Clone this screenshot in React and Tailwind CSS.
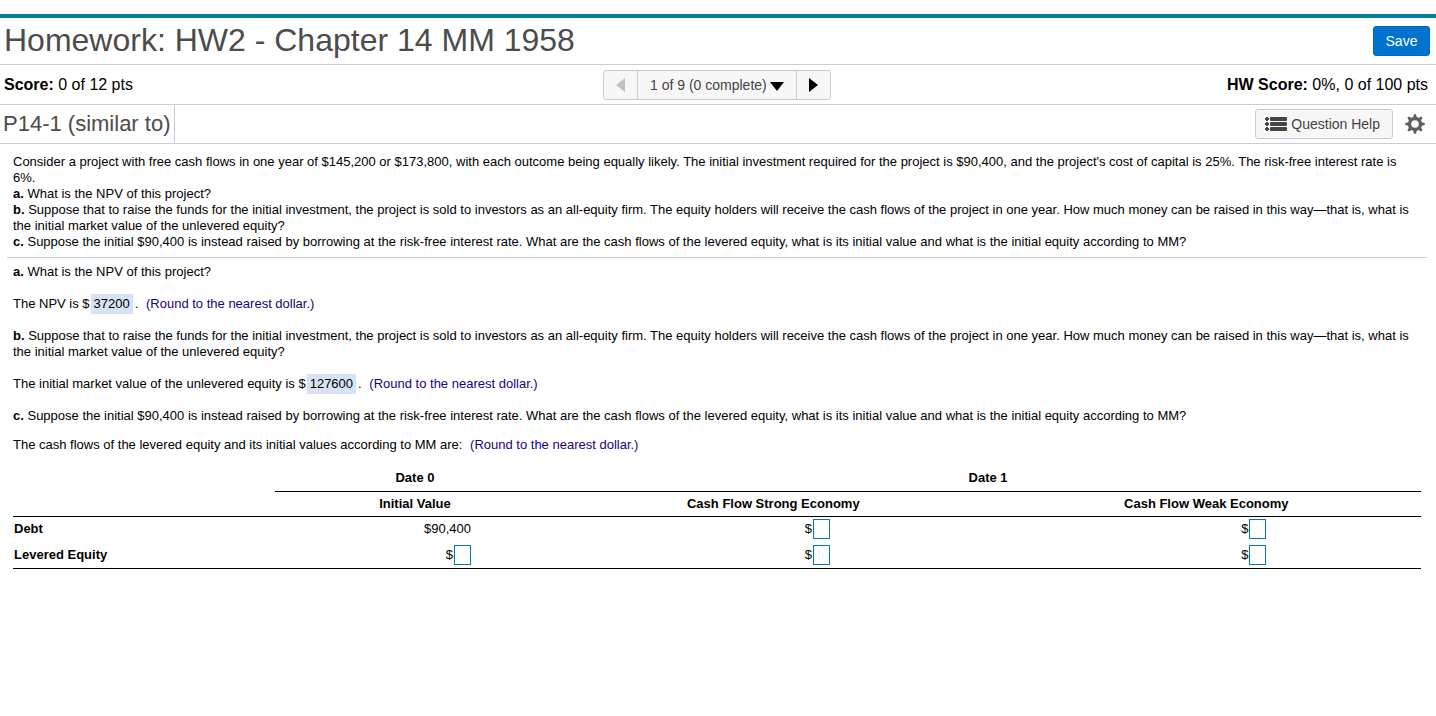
import React, { useState } from 'react';

const QUESTION_COUNT = 9;

const ListIcon = () => (
  <svg width="22" height="14" viewBox="0 0 22 14" fill="#444" aria-hidden="true">
    {[0, 5, 10].map((y) => (
      <g key={y}>
        <path d={`M1 ${y}h2v1h1v2h-1v1h-2v-1h-1v-2h1z`} />
        <rect x="5" y={y} width="17" height="4" rx="1" />
      </g>
    ))}
  </svg>
);

const GearIcon = () => (
  <svg width="20" height="20" viewBox="0 0 20 20" aria-hidden="true">
    <g fill="#5f5f5f">
      {[0, 45, 90, 135, 180, 225, 270, 315].map((deg) => (
        <path key={deg} d="M9 0.3h2l1 4h-4z" transform={`rotate(${deg} 10 10)`} />
      ))}
    </g>
    <circle cx="10" cy="10" r="5.5" fill="none" stroke="#5f5f5f" strokeWidth="3.4" />
  </svg>
);

const Hint = () => <span className="ml-1 text-[#1b0080]">(Round to the nearest dollar.)</span>;

const Answer = ({ children }) => (
  <>
    <span className="mx-px inline-block bg-[#d9e2f3] px-[3px] h-5 leading-5 -my-0.5">{children}</span>
    <span className="ml-px">.</span>
  </>
);

const MoneyInput = ({ label }) => (
  <label className="flex items-center gap-px">
    $
    <input type="text" aria-label={label} className="w-[17px] h-5 border border-[#007fa3] bg-white px-0.5 outline-none" />
  </label>
);

const PartB = () => (
  <p>
    <b>b.</b> Suppose that to raise the funds for the initial investment, the project is sold to investors as an
    all-equity firm. The equity holders will receive the cash flows of the project in one year. How much money can be
    raised in this way—that is, what is the initial market value of the unlevered equity?
  </p>
);

const PartC = () => (
  <p>
    <b>c.</b> Suppose the initial $90,400 is instead raised by borrowing at the risk-free interest rate. What are the
    cash flows of the levered equity, what is its initial value and what is the initial equity according to MM?
  </p>
);

const PartA = () => (
  <p>
    <b>a.</b> What is the NPV of this project?
  </p>
);

const Pager = () => {
  const [current, setCurrent] = useState(1);

  return (
    <div className="flex h-[30px] rounded-[3px] border border-[#ccc] bg-[#f7f7f7]">
      <button
        type="button"
        aria-label="Previous question"
        disabled={current === 1}
        onClick={() => setCurrent(current - 1)}
        className="flex w-[34px] items-center justify-center border-r border-[#ccc] text-black disabled:text-[#bfc1c4]"
      >
        <svg width="9" height="14" viewBox="0 0 9 14" fill="currentColor">
          <path d="M9 0v14L0 7z" />
        </svg>
      </button>
      <div className="relative">
        <select
          aria-label="Question"
          value={current}
          onChange={(e) => setCurrent(Number(e.target.value))}
          className="h-full w-[158px] appearance-none bg-transparent pl-3 pr-6 text-sm text-[#444] outline-none"
        >
          {Array.from({ length: QUESTION_COUNT }, (_, i) => (
            <option key={i} value={i + 1}>
              {i + 1} of {QUESTION_COUNT} (0 complete)
            </option>
          ))}
        </select>
        <svg className="pointer-events-none absolute right-3 top-[11px]" width="14" height="9" viewBox="0 0 14 9">
          <path d="M0 0h14L7 9z" />
        </svg>
      </div>
      <button
        type="button"
        aria-label="Next question"
        disabled={current === QUESTION_COUNT}
        onClick={() => setCurrent(current + 1)}
        className="flex w-[34px] items-center justify-center border-l border-[#ccc] text-black disabled:text-[#bfc1c4]"
      >
        <svg width="9" height="14" viewBox="0 0 9 14" fill="currentColor">
          <path d="M0 0v14l9-7z" />
        </svg>
      </button>
    </div>
  );
};

const CashFlowTable = () => (
  <table className="mt-[13px] w-full table-fixed border-collapse">
    <colgroup>
      <col className="w-[18.6%]" />
      <col className="w-[19.9%]" />
      <col className="w-[31%]" />
      <col />
    </colgroup>
    <thead>
      <tr className="h-[25px]">
        <td />
        <th scope="col" className="border-b border-black">Date 0</th>
        <th scope="colgroup" colSpan={2} className="border-b border-black">Date 1</th>
      </tr>
      <tr className="h-[25px] border-b border-black">
        <td />
        <th scope="col">Initial Value</th>
        <th scope="col">Cash Flow Strong Economy</th>
        <th scope="col">Cash Flow Weak Economy</th>
      </tr>
    </thead>
    <tbody className="border-b border-black">
      {['Debt', 'Levered Equity'].map((name) => (
        <tr key={name} className="h-[26px]">
          <th scope="row" className="pl-px text-left">{name}</th>
          <td>
            <div className="flex w-[70%] justify-end">
              {name === 'Debt' ? '$90,400' : <MoneyInput label={`${name} initial value`} />}
            </div>
          </td>
          <td>
            <div className="flex w-[63%] justify-end">
              <MoneyInput label={`${name} cash flow strong economy`} />
            </div>
          </td>
          <td>
            <div className="flex w-[64%] justify-end">
              <MoneyInput label={`${name} cash flow weak economy`} />
            </div>
          </td>
        </tr>
      ))}
    </tbody>
  </table>
);

const App = () => {
  return (
    <div className="bg-white pt-[14px] font-['Liberation_Sans',Arial,sans-serif] text-[13px] leading-4 text-black">
      <header className="flex h-[51px] items-center justify-between border-t-4 border-b border-t-[#007fa3] border-b-[#c7cddd] pl-1 pr-1.5">
        <h1 className="pb-0.5 text-[32px] leading-9 text-[#4c4c4c]">Homework: HW2 - Chapter 14 MM 1958</h1>
        <button type="button" className="h-[30px] w-[57px] rounded-[3px] border border-[#0068bd] bg-[#0073cf] text-sm text-white">
          Save
        </button>
      </header>

      <div className="grid h-10 grid-cols-[1fr_auto_1fr] items-center border-b border-[#c7cddd] pl-1.5 pr-2 text-base">
        <p className="-ml-0.5 pt-px"><b>Score:</b> 0 of 12 pts</p>
        <Pager />
        <p className="pt-px text-right"><b>HW Score:</b> 0%, 0 of 100 pts</p>
      </div>

      <div className="flex h-[39px] items-center justify-between border-b border-[#c7cddd] pl-[3px] pr-[11px]">
        <h2 className="flex h-9 items-center border-r border-[#c7cddd] pr-1 text-[22px] text-[#4c4c4c]">
          P14-1 (similar to)
        </h2>
        <div className="flex items-center gap-3">
          <button
            type="button"
            className="flex h-[30px] items-center gap-1 rounded-[3px] border border-[#ccc] bg-[#f7f7f7] px-[9px] text-sm text-[#444]"
          >
            <ListIcon />
            <span className="whitespace-nowrap pr-[3px]">Question Help</span>
          </button>
          <button type="button" aria-label="Settings">
            <GearIcon />
          </button>
        </div>
      </div>

      <main className="pl-[7px] pr-[9px]">
        <section className="border-b border-[#c7cddd] px-1.5 pb-[7px] pt-2.5">
          <p>
            Consider a project with free cash flows in one year of $145,200 or $173,800, with each outcome being equally
            likely. The initial investment required for the project is $90,400, and the project's cost of capital is
            25%. The risk-free interest rate is 6%.
          </p>
          <PartA />
          <PartB />
          <PartC />
        </section>

        <section className="px-1.5 pt-1.5">
          <div className="space-y-4">
            <PartA />
            <p>The NPV is $<Answer>37200</Answer> <Hint /></p>
            <PartB />
            <p>The initial market value of the unlevered equity is $<Answer>127600</Answer> <Hint /></p>
            <PartC />
          </div>
          <p className="mt-[13px]">
            The cash flows of the levered equity and its initial values according to MM are: <Hint />
          </p>
          <CashFlowTable />
        </section>
      </main>
    </div>
  );
};

export default App;
